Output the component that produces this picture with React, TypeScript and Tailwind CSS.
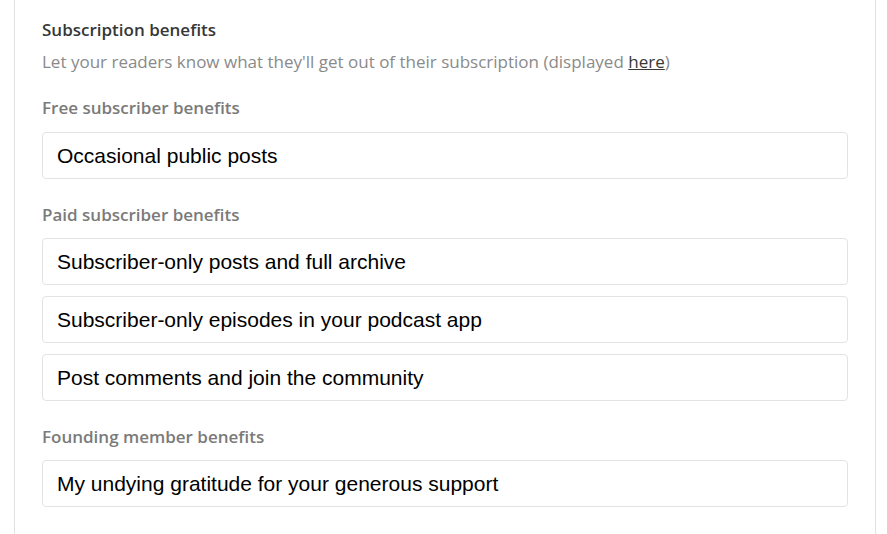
import React from "react";

const labelCls =
  "h-[24px] leading-[24px] text-[17px] font-semibold text-[#7a7a7a] font-['Open_Sans',sans-serif]";
const inputCls =
  "block w-full h-[47px] rounded-[4px] border border-[#e3e3e3] bg-white px-[14px] text-[21px] text-black font-['Liberation_Sans',Arial,sans-serif] outline-none";

function Field({ value, className = "" }: { value: string; className?: string }) {
  return <input readOnly defaultValue={value} className={`${inputCls} ${className}`} />;
}

export default function App() {
  return (
    <div className="w-[887px] h-[534px] overflow-hidden bg-white">
      <div className="ml-[14px] w-[862px] h-full border-x border-[#e2e2e2] px-[27px] pt-[18px]">
        <div className="h-[24px] leading-[24px] text-[17px] font-semibold text-[#363737] font-['Open_Sans',sans-serif]">
          Subscription benefits
        </div>
        <div className="mt-[8px] h-[24px] leading-[24px] text-[17px] text-[#8a8a8a] font-['Open_Sans',sans-serif]">
          Let your readers know what they'll get out of their subscription (displayed{" "}
          <a className="underline text-[#363737]">here</a>)
        </div>
        <div className={`mt-[22px] ${labelCls}`}>Free subscriber benefits</div>
        <Field className="mt-[12px]" value="Occasional public posts" />
        <div className={`mt-[24px] ${labelCls}`}>Paid subscriber benefits</div>
        <Field className="mt-[11px]" value="Subscriber-only posts and full archive" />
        <Field className="mt-[11px]" value="Subscriber-only episodes in your podcast app" />
        <Field className="mt-[11px]" value="Post comments and join the community" />
        <div className={`mt-[24px] ${labelCls}`}>Founding member benefits</div>
        <Field className="mt-[11px]" value="My undying gratitude for your generous support" />
      </div>
    </div>
  );
}
